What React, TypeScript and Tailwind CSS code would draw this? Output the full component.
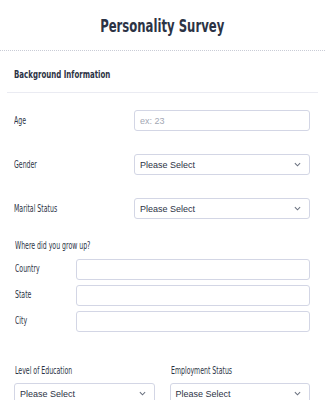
import React from "react";

const Chevron = () => (
  <svg width="7" height="5" viewBox="0 0 8 5" className="shrink-0">
    <path d="M1 1l3 3 3-3" fill="none" stroke="#6b7280" strokeWidth="1.2" />
  </svg>
);

const font = "font-['Liberation_Sans_Narrow','DejaVu_Sans_Condensed',sans-serif]";
const lbl = `${font} block origin-left scale-x-[0.69] whitespace-nowrap text-[10px] leading-[12px] text-[#2c3345]`;
const box = "h-[21px] rounded-[3px] border border-[#d3d6e5] bg-white flex items-center px-[5px]";
const sel = "font-['Liberation_Sans',Arial,sans-serif] text-[9px] leading-[12px] text-[#2c3345]";

function Select({ className = "" }: { className?: string }) {
  return (
    <div className={`${box} justify-between pr-[8px] ${className}`}>
      <span className={sel}>Please Select</span>
      <Chevron />
    </div>
  );
}

export default function App() {
  return (
    <div className="w-[325px] h-[400px] overflow-hidden bg-white">
      <div className="h-[51px] flex items-center justify-center border-b border-dotted border-[#c9ccd6]">
        <h1 className={`${font} block scale-x-[0.72] whitespace-nowrap text-[18px] leading-[22px] font-bold text-[#2c3345] pt-[1px]`}>
          Personality Survey
        </h1>
      </div>
      <div className="px-[7px]">
        <div className="h-[42px] flex items-center pl-[7px] border-b border-[#eaebf2]">
          <span className={`${lbl} text-[11px] leading-[14px] font-bold mt-[6px] scale-x-[0.71]`}>Background Information</span>
        </div>
      </div>
      <div className="pl-[14px] pr-[15px]">
        <div className="flex items-center mt-[17px] h-[21px]">
          <div className="w-[120px] shrink-0 flex"><span className={lbl}>Age</span></div>
          <div className={`${box} flex-1`}>
            <span className={`${sel} text-[#a3a7b4]`}>ex: 23</span>
          </div>
        </div>
        <div className="flex items-center mt-[23px] h-[21px]">
          <div className="w-[120px] shrink-0 flex"><span className={lbl}>Gender</span></div>
          <Select className="flex-1" />
        </div>
        <div className="flex items-center mt-[23px] h-[21px]">
          <div className="w-[120px] shrink-0 flex"><span className={lbl}>Marital Status</span></div>
          <Select className="flex-1" />
        </div>
        <div className="mt-[21px] pl-[1px] flex"><span className={lbl}>Where did you grow up?</span></div>
        <div className="flex flex-col gap-[6px] mt-[7px]">
          {["Country", "State", "City"].map((t) => (
            <div key={t} className="flex items-center h-[20px]">
              <div className="w-[62px] shrink-0 pl-[1px] flex"><span className={lbl}>{t}</span></div>
              <div className={`${box} h-[20px] flex-1`} />
            </div>
          ))}
        </div>
        <div className="flex gap-[15px] mt-[34px]">
          <div className="flex-1 flex flex-col">
            <div className="pl-[1px] flex"><span className={lbl}>Level of Education</span></div>
            <Select className="mt-[6px]" />
          </div>
          <div className="flex-1 flex flex-col">
            <div className="pl-[1px] flex"><span className={lbl}>Employment Status</span></div>
            <Select className="mt-[6px]" />
          </div>
        </div>
      </div>
    </div>
  );
}
